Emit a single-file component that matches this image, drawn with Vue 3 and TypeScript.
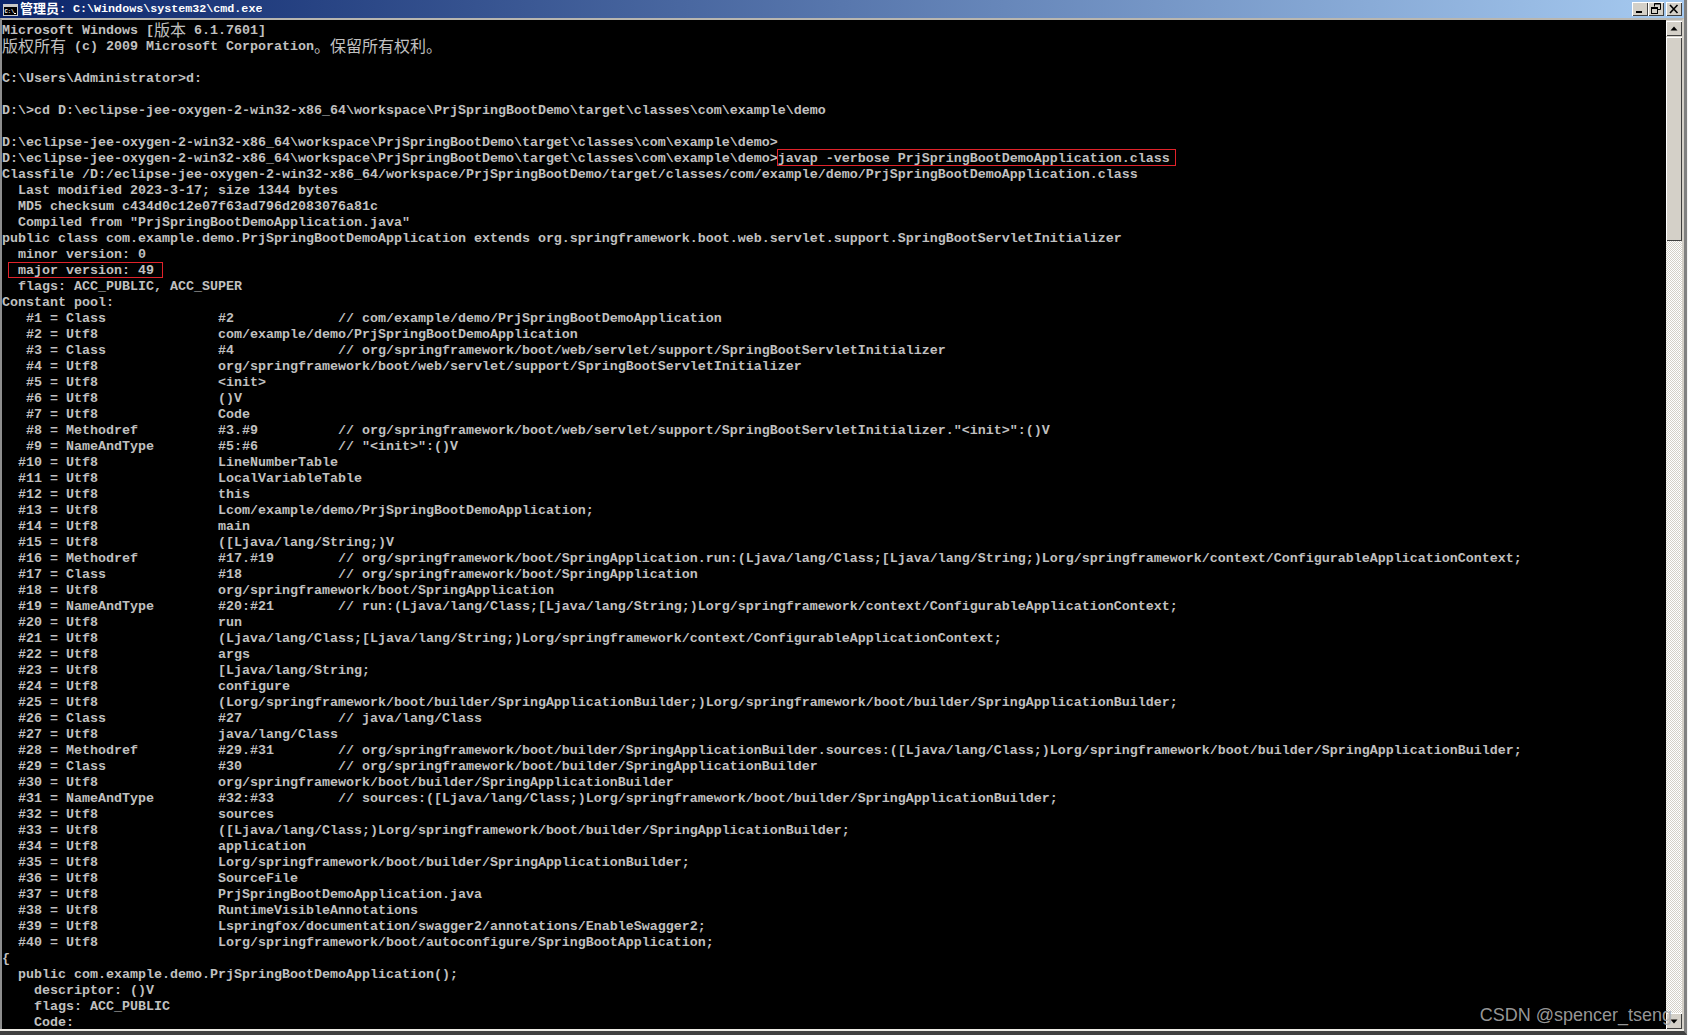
<script setup lang="ts">
const lines: string[] = [
  'Microsoft Windows [版本 6.1.7601]',
  '版权所有 (c) 2009 Microsoft Corporation。保留所有权利。',
  '',
  'C:\\Users\\Administrator>d:',
  '',
  'D:\\>cd D:\\eclipse-jee-oxygen-2-win32-x86_64\\workspace\\PrjSpringBootDemo\\target\\classes\\com\\example\\demo',
  '',
  'D:\\eclipse-jee-oxygen-2-win32-x86_64\\workspace\\PrjSpringBootDemo\\target\\classes\\com\\example\\demo>',
  'D:\\eclipse-jee-oxygen-2-win32-x86_64\\workspace\\PrjSpringBootDemo\\target\\classes\\com\\example\\demo>javap -verbose PrjSpringBootDemoApplication.class',
  'Classfile /D:/eclipse-jee-oxygen-2-win32-x86_64/workspace/PrjSpringBootDemo/target/classes/com/example/demo/PrjSpringBootDemoApplication.class',
  '  Last modified 2023-3-17; size 1344 bytes',
  '  MD5 checksum c434d0c12e07f63ad796d2083076a81c',
  '  Compiled from "PrjSpringBootDemoApplication.java"',
  'public class com.example.demo.PrjSpringBootDemoApplication extends org.springframework.boot.web.servlet.support.SpringBootServletInitializer',
  '  minor version: 0',
  '  major version: 49',
  '  flags: ACC_PUBLIC, ACC_SUPER',
  'Constant pool:',
  '   #1 = Class              #2             // com/example/demo/PrjSpringBootDemoApplication',
  '   #2 = Utf8               com/example/demo/PrjSpringBootDemoApplication',
  '   #3 = Class              #4             // org/springframework/boot/web/servlet/support/SpringBootServletInitializer',
  '   #4 = Utf8               org/springframework/boot/web/servlet/support/SpringBootServletInitializer',
  '   #5 = Utf8               <init>',
  '   #6 = Utf8               ()V',
  '   #7 = Utf8               Code',
  '   #8 = Methodref          #3.#9          // org/springframework/boot/web/servlet/support/SpringBootServletInitializer."<init>":()V',
  '   #9 = NameAndType        #5:#6          // "<init>":()V',
  '  #10 = Utf8               LineNumberTable',
  '  #11 = Utf8               LocalVariableTable',
  '  #12 = Utf8               this',
  '  #13 = Utf8               Lcom/example/demo/PrjSpringBootDemoApplication;',
  '  #14 = Utf8               main',
  '  #15 = Utf8               ([Ljava/lang/String;)V',
  '  #16 = Methodref          #17.#19        // org/springframework/boot/SpringApplication.run:(Ljava/lang/Class;[Ljava/lang/String;)Lorg/springframework/context/ConfigurableApplicationContext;',
  '  #17 = Class              #18            // org/springframework/boot/SpringApplication',
  '  #18 = Utf8               org/springframework/boot/SpringApplication',
  '  #19 = NameAndType        #20:#21        // run:(Ljava/lang/Class;[Ljava/lang/String;)Lorg/springframework/context/ConfigurableApplicationContext;',
  '  #20 = Utf8               run',
  '  #21 = Utf8               (Ljava/lang/Class;[Ljava/lang/String;)Lorg/springframework/context/ConfigurableApplicationContext;',
  '  #22 = Utf8               args',
  '  #23 = Utf8               [Ljava/lang/String;',
  '  #24 = Utf8               configure',
  '  #25 = Utf8               (Lorg/springframework/boot/builder/SpringApplicationBuilder;)Lorg/springframework/boot/builder/SpringApplicationBuilder;',
  '  #26 = Class              #27            // java/lang/Class',
  '  #27 = Utf8               java/lang/Class',
  '  #28 = Methodref          #29.#31        // org/springframework/boot/builder/SpringApplicationBuilder.sources:([Ljava/lang/Class;)Lorg/springframework/boot/builder/SpringApplicationBuilder;',
  '  #29 = Class              #30            // org/springframework/boot/builder/SpringApplicationBuilder',
  '  #30 = Utf8               org/springframework/boot/builder/SpringApplicationBuilder',
  '  #31 = NameAndType        #32:#33        // sources:([Ljava/lang/Class;)Lorg/springframework/boot/builder/SpringApplicationBuilder;',
  '  #32 = Utf8               sources',
  '  #33 = Utf8               ([Ljava/lang/Class;)Lorg/springframework/boot/builder/SpringApplicationBuilder;',
  '  #34 = Utf8               application',
  '  #35 = Utf8               Lorg/springframework/boot/builder/SpringApplicationBuilder;',
  '  #36 = Utf8               SourceFile',
  '  #37 = Utf8               PrjSpringBootDemoApplication.java',
  '  #38 = Utf8               RuntimeVisibleAnnotations',
  '  #39 = Utf8               Lspringfox/documentation/swagger2/annotations/EnableSwagger2;',
  '  #40 = Utf8               Lorg/springframework/boot/autoconfigure/SpringBootApplication;',
  '{',
  '  public com.example.demo.PrjSpringBootDemoApplication();',
  '    descriptor: ()V',
  '    flags: ACC_PUBLIC',
  '    Code:',
]

interface Segment {
  text: string
  cjk: boolean
}

const cjkChars = /[\u3000-\u9fff]/
const rows: Segment[][] = lines.map((line) =>
  line
    .split(/([\u3000-\u9fff]+)/)
    .filter((text) => text.length > 0)
    .map((text) => ({ text, cjk: cjkChars.test(text) })),
)
</script>

<template>
  <div class="window">
    <div class="frame">
      <header class="titlebar">
        <svg class="app-icon" width="15" height="12" viewBox="0 0 15 12">
          <rect width="15" height="12" fill="#c8c8c8" />
          <rect x="1" y="3" width="13" height="8" fill="#000" />
          <text x="1.5" y="9" font-size="5.5" font-weight="700" font-family="Liberation Mono, monospace" fill="#fff">C:\</text>
          <rect x="11" y="9" width="2" height="1" fill="#fff" />
        </svg>
        <span class="title"><span class="title-cjk">管理员</span>: C:\Windows\system32\cmd.exe</span>
        <div class="controls">
          <button class="ctl" aria-label="minimize">
            <svg width="16" height="14" viewBox="0 0 16 14"><rect x="4" y="9" width="6" height="2" fill="#000" /></svg>
          </button>
          <button class="ctl" aria-label="restore">
            <svg width="16" height="14" viewBox="0 0 16 14" fill="none" stroke="#000"><path d="M6.5 4.5V1.5H12.5V7.5H10" /><path d="M6 2H12" /><rect x="3.5" y="5.5" width="6" height="6" /><path d="M3 6.5H10" /></svg>
          </button>
          <button class="ctl close" aria-label="close">
            <svg width="16" height="14" viewBox="0 0 16 14" stroke="#000" stroke-width="1.6"><path d="M4 3L11.5 11M11.5 3L4 11" /></svg>
          </button>
        </div>
      </header>
      <div class="body">
        <main class="console">
          <div v-for="(row, i) in rows" :key="i" class="line"><span v-for="(seg, j) in row" :key="j" :class="{ cjk: seg.cjk }">{{ seg.text }}</span></div>
          <div class="mark cmd-mark"></div>
          <div class="mark ver-mark"></div>
        </main>
        <aside class="scrollbar">
          <div class="arrow arrow-up">
            <svg width="8" height="5" viewBox="0 0 8 5"><path d="M4 0.5L7.5 4.5H0.5Z" fill="#000" /></svg>
          </div>
          <div class="thumb"></div>
          <div class="track"></div>
          <div class="arrow arrow-down">
            <svg width="8" height="5" viewBox="0 0 8 5"><path d="M4 4.5L7.5 0.5H0.5Z" fill="#000" /></svg>
          </div>
        </aside>
      </div>
      <footer class="bottom"></footer>
    </div>
    <div class="watermark">CSDN @spencer_tseng</div>
  </div>
</template>

<style>
html, body { margin: 0; background: #000; }
</style>

<style scoped>
.window {
  position: relative;
  width: 1688px;
  height: 1035px;
  box-sizing: border-box;
  overflow: hidden;
  border-right: 1px solid #f4f4f4;
  background: #d4d0c8;
}
.frame {
  height: 100%;
  box-sizing: border-box;
  display: flex;
  flex-direction: column;
  border-right: 3px solid #808080;
  border-bottom: 4px solid #404040;
}
.titlebar {
  height: 18px;
  display: flex;
  align-items: center;
  padding: 0 2px 0 3px;
  box-sizing: border-box;
  background: linear-gradient(90deg, #0a246a 0%, #a6caf0 100%);
  color: #fff;
  flex: none;
}
.app-icon { flex: none; margin: 1px 2px 0 0; }
.title {
  align-self: flex-start;
  height: 18px;
  overflow: hidden;
  font: bold 11.7px/19px "Liberation Mono", "Noto Sans CJK SC", monospace;
  white-space: pre;
}
.title-cjk { font-size: 13px; vertical-align: top; }
.controls { margin-left: auto; display: flex; }
.ctl {
  width: 16px;
  height: 14px;
  padding: 0;
  border: 0;
  display: block;
  background: #d4d0c8;
  box-shadow: inset 1px 1px 0 #fff, inset -1px -1px 0 #404040;
}
.ctl svg { display: block; }
.ctl.close { margin-left: 2px; }
.body {
  flex: 1;
  min-height: 0;
  display: flex;
  border-top: 2px solid #b8b6b0;
  border-left: 2px solid #8e8e8e;
  border-right: 2px solid #d4d0c8;
}
.console {
  position: relative;
  flex: 1;
  min-width: 0;
  background: #000;
  color: #c0c0c0;
  padding: 3px 0 0 0;
  overflow: hidden;
  font: bold 13.33px/16px "Liberation Mono", "Noto Sans CJK SC", monospace;
}
.line {
  height: 16px;
  white-space: pre;
}
.cjk {
  font-family: "Noto Sans CJK SC", sans-serif;
  font-size: 16px;
  font-weight: 400;
  line-height: 12px;
  vertical-align: top;
}
.mark {
  position: absolute;
  border: 1px solid #e0222a;
  box-sizing: border-box;
}
.cmd-mark { left: 775px; top: 129px; width: 399px; height: 17px; }
.ver-mark { left: 6px; top: 242px; width: 155px; height: 16px; }
.scrollbar {
  width: 16px;
  flex: none;
  display: flex;
  flex-direction: column;
}
.arrow {
  flex: none;
  background: #d4d0c8;
  box-shadow: inset 1px 1px 0 #fff, inset -1px -1px 0 #404040;
  display: flex;
  align-items: center;
  justify-content: center;
}
.arrow-up { height: 15px; margin-top: 1px; }
.arrow-down { height: 16px; }
.thumb {
  height: 204px;
  margin-top: 1px;
  flex: none;
  background: #d4d0c8;
  box-shadow: inset 1px 1px 0 #fff, inset -1px -1px 0 #404040;
}
.track {
  flex: 1;
  background: repeating-conic-gradient(#d4d0c8 0 25%, #fff 0 50%) 0 0 / 2px 2px;
}
.bottom {
  height: 2px;
  flex: none;
  background: #eceae4;
}
.watermark {
  position: absolute;
  right: 15px;
  bottom: 9px;
  font: 18px/22px "Liberation Sans", Arial, sans-serif;
  color: rgba(170, 170, 170, 0.9);
  white-space: pre;
}
</style>
